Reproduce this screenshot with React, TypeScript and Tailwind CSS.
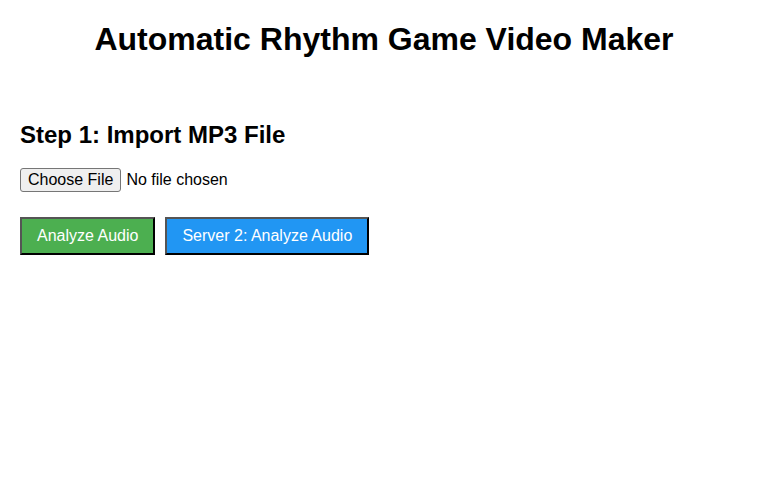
import React from "react";

const App = () => {
    return (
        <div className="min-h-[480px] bg-white px-5 pt-[21px] text-black font-['Liberation_Sans',Arial,sans-serif]">
            <h1 className="text-center text-[32px] font-bold leading-[37px]">
                Automatic Rhythm Game Video Maker
            </h1>
            <div className="mt-[63px]">
                <h2 className="text-2xl font-bold leading-[28px]">Step 1: Import MP3 File</h2>
                <div className="mt-[19px] h-6 flex items-center">
                    <input
                        type="file"
                        accept=".mp3"
                        className="text-base leading-[18px] file:mr-[5px] file:h-6 file:px-[7px] file:border file:border-[#767676] file:rounded-[3px] file:bg-[#efefef] file:text-black"
                    />
                </div>
                <div className="mt-[25px] flex gap-[10px]">
                    <button className="h-[38px] px-[15px] bg-[#4CAF50] text-white text-base border-2 border-[#222] [border-style:outset] border-t-[#555] border-l-[#555]">
                        Analyze Audio
                    </button>
                    <button className="h-[38px] px-[15px] bg-[#2196F3] text-white text-base border-2 border-[#222] [border-style:outset] border-t-[#555] border-l-[#555]">
                        Server 2: Analyze Audio
                    </button>
                </div>
            </div>
        </div>
    );
};

export default App;
